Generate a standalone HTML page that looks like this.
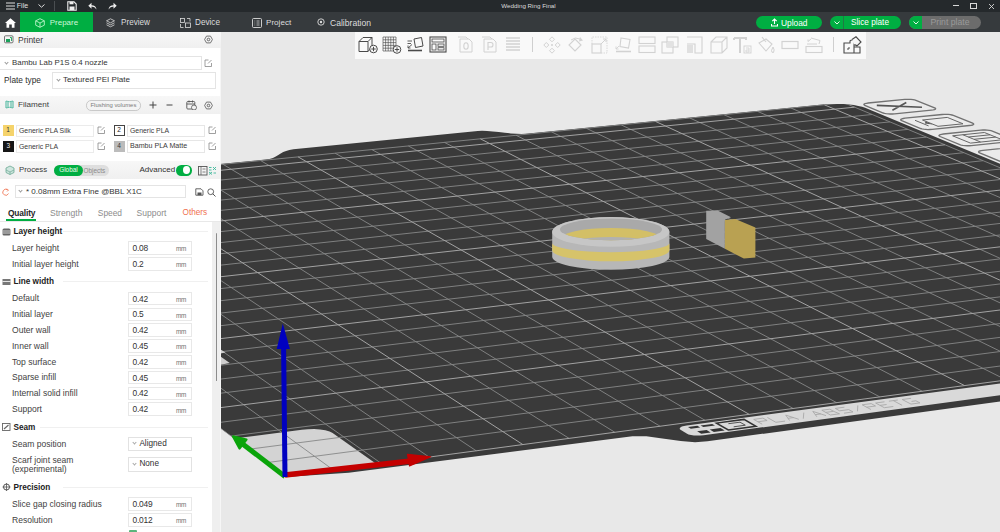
<!DOCTYPE html>
<html><head><meta charset="utf-8">
<style>
*{box-sizing:border-box;margin:0;padding:0}
body{width:1000px;height:532px;overflow:hidden;position:relative;background:#e8e8e8;font-family:"Liberation Sans",sans-serif;color:#333}
.a{position:absolute;white-space:nowrap;line-height:1}
#title{left:0;top:0;width:1000px;height:12px;background:#25292c}
#tabs{left:0;top:12px;width:1000px;height:20px;background:#363a3d}
#panel{left:0;top:32px;width:221px;height:500px;background:#fff;border-right:1px solid #f6f6f6;overflow:hidden}
.hdr{position:absolute;left:0;width:220px;background:#f2f2f2}
.lbl{position:absolute;left:12px;font-size:8.4px;color:#505050;white-space:nowrap;line-height:1}
.box{position:absolute;left:128px;width:63.5px;height:14px;border:1px solid #e3e3e3;border-radius:1px;background:#fff}
.box .v{position:absolute;left:4px;top:3px;font-size:8px;line-height:1;color:#303030}
.box .u{position:absolute;left:47px;top:5.5px;font-size:6px;line-height:1;color:#666}
.dd{position:absolute;left:128px;width:63.5px;height:14px;border:1px solid #e3e3e3;border-radius:1px;background:#fff}
.dd .v{position:absolute;left:11px;top:3px;font-size:8.2px;line-height:1;color:#303030}
.chev{position:absolute;width:4px;height:4px;border-right:1px solid #aaa;border-bottom:1px solid #aaa;transform:rotate(45deg)}
.grp{position:absolute;left:13.5px;font-size:8.2px;font-weight:bold;color:#262626;white-space:nowrap;line-height:1}
.gl{position:absolute;height:1px;background:#efefef}
.gi{position:absolute;left:2px;width:8px;height:7px}
#tb{left:355px;top:32px;width:511px;height:26.6px;background:#f9f9f9}
.tab{position:absolute;top:17.5px;font-size:8.2px;line-height:1;color:#e6e6e6}
.btn{position:absolute;top:16px;height:13px;border-radius:6.5px;background:#00ae42}
.btxt{position:absolute;top:18.5px;font-size:8.3px;line-height:1;color:#fff}
.fbox{position:absolute;width:78px;height:12.5px;border:1px solid #e6e6e6;background:#fff}
.fbox span{position:absolute;left:3px;top:2.5px;font-size:6.9px;line-height:1;color:#333}
.num{position:absolute;width:10.5px;height:11.5px;font-size:6px;line-height:11.5px;text-align:center}
</style></head>
<body>
<div id="title" class="a"></div>
<div id="tabs" class="a"></div>
<svg class="a" style="left:6px;top:2px" width="9" height="8" viewBox="0 0 9 8"><path d="M0,1 L9,1 M0,4 L9,4 M0,7 L9,7" stroke="#e0e0e0" stroke-width="1"/></svg>
<div class="a" style="left:16.8px;top:2.37px;font-size:7px;color:#e0e0e0;font-weight:normal;">File</div>
<svg class="a" style="left:38px;top:4px" width="7" height="4" viewBox="0 0 7 4"><path d="M0.5,0.5 L3.5,3.2 L6.5,0.5" fill="none" stroke="#ddd" stroke-width="1"/></svg>
<div class="a" style="left:54px;top:1px;width:1.00px;height:10.00px;background:#4a4e51"></div>
<svg class="a" style="left:67px;top:1px" width="10" height="10" viewBox="0 0 10 10"><path d="M0.8,0.8 L7,0.8 L9.2,3 L9.2,9.2 L0.8,9.2 Z" fill="none" stroke="#eee" stroke-width="1.1"/><rect x="2.5" y="5.5" width="5" height="3.5" fill="#eee"/><rect x="2.5" y="0.8" width="4" height="2.5" fill="#eee"/></svg>
<svg class="a" style="left:88px;top:1.5px" width="9" height="8" viewBox="0 0 9 8"><path d="M8.5,7.5 Q8,3.2 3.5,3.2 L3.5,0.8 L0.3,3.8 L3.5,6.8 L3.5,4.6 Q6.8,4.6 8.5,7.5 Z" fill="#eee"/></svg>
<svg class="a" style="left:108px;top:1.5px" width="9" height="8" viewBox="0 0 9 8"><path d="M0.5,7.5 Q1,3.2 5.5,3.2 L5.5,0.8 L8.7,3.8 L5.5,6.8 L5.5,4.6 Q2.2,4.6 0.5,7.5 Z" fill="#eee"/></svg>
<div class="a" style="left:501.3px;top:2.54px;font-size:6.25px;color:#dcdcdc;font-weight:normal;">Wedding Ring Final</div>
<div class="a" style="left:953px;top:5px;width:5.50px;height:0.80px;background:#d8d8d8"></div>
<div class="a" style="left:969.5px;top:2.5px;width:7.50px;height:6.00px;border:0.8px solid #d8d8d8;border-top-width:1.6px"></div>
<svg class="a" style="left:987.5px;top:2.5px" width="7" height="7" viewBox="0 0 7 7"><path d="M1,1 L6,6 M6,1 L1,6" stroke="#d8d8d8" stroke-width="0.9"/></svg>
<svg class="a" style="left:5px;top:17.5px" width="11" height="10" viewBox="0 0 11 10"><path d="M5.5,0.3 L11,5 L9.5,5 L9.5,9.7 L6.8,9.7 L6.8,6.5 L4.2,6.5 L4.2,9.7 L1.5,9.7 L1.5,5 L0,5 Z" fill="#fff"/></svg>
<div class="a" style="left:20px;top:12px;width:72.50px;height:19.50px;background:#00ae42"></div>
<svg class="a" style="left:34.5px;top:17.5px" width="10" height="10" viewBox="0 0 10 10"><path d="M5,0.7 L9.3,2.8 L9.3,7.2 L5,9.3 L0.7,7.2 L0.7,2.8 Z M0.7,2.8 L5,5 L9.3,2.8 M5,5 L5,9.3" fill="none" stroke="#b9f5c8" stroke-width="0.9"/></svg>
<div class="a" style="left:49.7px;top:19.08px;font-size:8px;color:#cdf7d6;font-weight:normal;">Prepare</div>
<svg class="a" style="left:105.5px;top:17.5px" width="9" height="10" viewBox="0 0 9 10"><path d="M4.5,0.8 L8.5,2.8 L4.5,4.8 L0.5,2.8 Z" fill="none" stroke="#ddd" stroke-width="0.8"/><path d="M0.5,4.8 L4.5,6.8 L8.5,4.8 M0.5,6.8 L4.5,8.8 L8.5,6.8" fill="none" stroke="#ddd" stroke-width="0.8"/></svg>
<div class="a" style="left:121px;top:19.01px;font-size:8.15px;color:#dddddd;font-weight:normal;">Preview</div>
<svg class="a" style="left:180px;top:17.5px" width="11" height="10" viewBox="0 0 11 10"><rect x="0.5" y="0.5" width="4" height="4" fill="none" stroke="#ddd" stroke-width="0.8"/><rect x="5.5" y="5" width="5" height="4.5" fill="none" stroke="#ddd" stroke-width="0.8"/><path d="M7,0.5 L10,0.5 L10,3.5 M0.5,6 L0.5,9.5 L3.5,9.5" fill="none" stroke="#ddd" stroke-width="0.8"/></svg>
<div class="a" style="left:195px;top:18.99px;font-size:8.18px;color:#dddddd;font-weight:normal;">Device</div>
<svg class="a" style="left:252px;top:17.5px" width="10" height="10" viewBox="0 0 10 10"><rect x="0.5" y="0.5" width="9" height="9" rx="1" fill="none" stroke="#ddd" stroke-width="0.9"/><path d="M2.5,3 L3.2,3 M2.5,5 L3.2,5 M2.5,7 L3.2,7 M4.5,3 L7.5,3 M4.5,5 L7.5,5 M4.5,7 L7.5,7" stroke="#ddd" stroke-width="0.75"/></svg>
<div class="a" style="left:266px;top:19.03px;font-size:8.1px;color:#dddddd;font-weight:normal;">Project</div>
<svg class="a" style="left:316.5px;top:18px" width="8" height="8" viewBox="0 0 8 8"><circle cx="4" cy="4" r="3.2" fill="none" stroke="#ddd" stroke-width="0.9"/><circle cx="4" cy="4" r="1.2" fill="#ddd"/></svg>
<div class="a" style="left:330px;top:18.80px;font-size:8.58px;color:#dddddd;font-weight:normal;">Calibration</div>
<div class="a" style="left:755.5px;top:16.2px;width:66.50px;height:12.80px;background:#00ae42;border-radius:6.5px"></div>
<svg class="a" style="left:771px;top:17.5px" width="7" height="9" viewBox="0 0 7 9"><path d="M3.5,6 L3.5,1 M1.3,3.2 L3.5,1 L5.7,3.2 M0.5,6 L0.5,8 L6.5,8 L6.5,6" fill="none" stroke="#fff" stroke-width="1.1"/></svg>
<div class="a" style="left:781px;top:18.50px;font-size:8.36px;color:#ffffff;font-weight:normal;">Upload</div>
<div class="a" style="left:829.5px;top:16.2px;width:71.50px;height:12.80px;background:#00ae42;border-radius:6.5px"></div>
<div class="a" style="left:842.5px;top:16.2px;width:0.70px;height:12.80px;background:#1f7a44"></div>
<svg class="a" style="left:833.5px;top:21px" width="6" height="4" viewBox="0 0 6 4"><path d="M0.5,0.5 L3,3 L5.5,0.5" fill="none" stroke="#fff" stroke-width="0.9"/></svg>
<div class="a" style="left:851px;top:18.56px;font-size:8.24px;color:#ffffff;font-weight:normal;">Slice plate</div>
<div class="a" style="left:909px;top:16.2px;width:72.00px;height:12.80px;background:#6c6c6c;border-radius:6.5px"></div>
<div class="a" style="left:909px;top:16.2px;width:13.00px;height:12.80px;background:#00ae42;border-radius:6.5px 0 0 6.5px"></div>
<svg class="a" style="left:912.5px;top:21px" width="6" height="4" viewBox="0 0 6 4"><path d="M0.5,0.5 L3,3 L5.5,0.5" fill="none" stroke="#fff" stroke-width="0.9"/></svg>
<div class="a" style="left:930.5px;top:18.36px;font-size:8.66px;color:#9a9a9a;font-weight:normal;">Print plate</div>
<svg width="780" height="500" viewBox="220 32 780 500" style="position:absolute;left:220px;top:32px">
<defs><clipPath id="pc"><path d="M285.4,477.1 L-90.5,194.7 L265.5,159.5 L269.5,158.9 L272.9,157.9 L275.8,156.6 L278.3,155.1 L280.7,153.6 L283.2,152.1 L286.1,150.9 L289.4,149.9 L293.4,149.3 L477.8,131.0 L482.1,130.8 L487.1,131.0 L492.7,131.4 L498.7,132.0 L504.8,132.7 L510.8,133.4 L516.4,133.8 L521.4,134.0 L525.7,133.8 L525.7,133.8 L822.3,104.5 L827.4,104.1 L832.8,103.9 L838.3,103.9 L843.7,104.1 L849.0,104.5 L853.9,105.1 L858.3,105.9 L862.1,106.8 L865.1,107.8 L1431.6,342.8 L707.5,441.3 L695.1,442.2 L680.7,440.9 L660.6,438.2 L646.4,436.3 L632.4,436.3 L348.6,472.8 Z"/></clipPath></defs>
<path fill="#3a3a3a" d="M285.4,477.1 L-90.5,194.7 L265.5,159.5 L269.5,158.9 L272.9,157.9 L275.8,156.6 L278.3,155.1 L280.7,153.6 L283.2,152.1 L286.1,150.9 L289.4,149.9 L293.4,149.3 L477.8,131.0 L482.1,130.8 L487.1,131.0 L492.7,131.4 L498.7,132.0 L504.8,132.7 L510.8,133.4 L516.4,133.8 L521.4,134.0 L525.7,133.8 L525.7,133.8 L822.3,104.5 L827.4,104.1 L832.8,103.9 L838.3,103.9 L843.7,104.1 L849.0,104.5 L853.9,105.1 L858.3,105.9 L862.1,106.8 L865.1,107.8 L1431.6,342.8 L707.5,441.3 L695.1,442.2 L680.7,440.9 L660.6,438.2 L646.4,436.3 L632.4,436.3 L348.6,472.8 Z"/>
<path fill="#d3d3d3" d="M285.4,477.1 L377.5,464.8 L332.6,433.0 L329.6,431.5 L325.3,430.3 L320.1,429.5 L314.1,429.1 L307.9,429.2 L301.9,429.8 L234.0,438.5 Z"/>
<path fill="#d9d9d9" d="M1567.5,318.4 L1569.6,318.0 L1571.1,317.5 L1571.9,316.8 L1572.0,316.0 L1571.2,315.3 L1569.8,314.6 L1562.4,311.7 L1560.3,311.1 L1557.8,310.6 L1554.9,310.2 L1552.0,310.0 L1549.1,310.1 L1546.5,310.3 L686.7,425.4 L684.0,425.9 L681.8,426.6 L680.4,427.4 L679.7,428.3 L679.9,429.2 L680.9,430.1 L686.7,433.6 L688.5,434.4 L691.0,435.0 L693.9,435.4 L697.1,435.6 L700.4,435.6 L703.5,435.3 Z"/>
<path fill="#333" d="M690.8,428.8 L700.2,427.5 L697.4,425.8 L688.0,427.1 Z"/>
<path fill="#333" d="M703.4,427.1 L715.0,425.5 L712.2,423.9 L700.5,425.4 Z"/>
<path fill="#333" d="M701.3,433.7 L710.7,432.4 L706.6,429.9 L697.1,431.2 Z"/>
<path fill="#333" d="M713.9,432.0 L724.7,430.5 L720.5,428.1 L709.7,429.5 Z"/>
<path fill="none" stroke="#333" stroke-width="1.5" d="M728.3,430.0 L755.9,426.3 L744.0,419.4 L716.4,423.1 Z"/>
<path fill="none" stroke="#444" stroke-width="0.9" d="M728.4,423.7 L740.0,422.2 L745.3,425.2 L733.7,426.8"/>
<path fill="none" stroke="#a8a8a8" stroke-width="0.9" d="M762.2,424.2 L753.7,419.4 L762.9,418.1 L767.1,420.5 L757.9,421.8 M767.4,417.5 L775.9,422.3 L785.1,421.1 M789.6,420.5 L785.7,415.1 L798.8,419.3 M787.9,418.3 L793.6,417.6 M803.3,418.7 L803.8,412.6 M816.9,416.8 L812.8,411.4 L826.0,415.6 M815.1,414.7 L820.8,413.9 M830.4,415.0 L821.8,410.2 L829.8,409.2 L833.6,411.3 L825.7,412.4 M833.6,411.3 L839.5,413.8 L830.4,415.0 M844.4,407.2 L835.3,408.4 L839.6,410.8 L848.7,409.6 L853.0,411.9 L844.0,413.2 M857.5,411.3 L857.8,405.4 M870.9,409.5 L862.2,404.8 L871.2,403.6 L875.5,406.0 L866.5,407.2 M884.5,401.8 L875.6,403.0 L884.3,407.7 L893.3,406.5 M879.9,405.4 L886.6,404.5 M888.9,401.2 L897.8,400.0 M893.3,400.6 L902.1,405.3 M911.1,398.3 L902.2,399.5 L911.0,404.1 L919.9,402.9 L915.9,400.8 L911.5,401.4"/>
<path stroke="#878888" stroke-width="0.9" fill="none" clip-path="url(#pc)" d="M333.2,469.9 L-49.5,191.3 M381.4,463.5 L-9.6,187.3 M429.1,457.1 L30.0,183.4 M476.2,450.8 L69.2,179.5 M569.1,438.4 L146.8,171.9 M614.9,432.3 L185.1,168.1 M660.2,426.3 L223.0,164.3 M705.0,420.3 L260.7,160.6 M793.2,408.5 L335.1,153.2 M836.7,402.7 L371.9,149.6 M879.8,396.9 L408.4,146.0 M922.4,391.3 L444.5,142.4 M1006.3,380.0 L516.1,135.3 M1047.7,374.5 L551.4,131.8 M1088.7,369.0 L586.4,128.3 M1129.3,363.6 L621.2,124.9 M1209.2,352.9 L690.0,118.1 M1248.7,347.7 L723.9,114.7 M1287.7,342.5 L757.6,111.4 M1326.4,337.3 L791.1,108.1 M1387.5,329.1 L844.1,102.8 M266.3,462.7 L1361.7,318.4 M248.4,449.3 L1336.3,307.8 M230.9,436.1 L1311.3,297.4 M213.7,423.2 L1286.8,287.2 M180.3,398.2 L1239.0,267.3 M164.1,386.0 L1215.7,257.6 M148.2,374.0 L1192.7,248.0 M132.6,362.3 L1170.2,238.6 M102.2,339.5 L1126.2,220.3 M87.4,328.4 L1104.8,211.4 M72.9,317.5 L1083.7,202.6 M58.7,306.8 L1062.9,194.0 M30.9,286.0 L1022.4,177.1 M17.4,275.8 L1002.5,168.8 M4.2,265.8 L983.0,160.7 M-8.9,256.0 L963.8,152.7 M-34.4,236.9 L926.3,137.1 M-46.8,227.6 L907.9,129.4 M-59.0,218.4 L889.9,121.9 M-71.0,209.4 L872.1,114.5 M-89.8,195.3 L844.1,102.8"/>
<path stroke="#a3a3a3" stroke-width="1" fill="none" clip-path="url(#pc)" d="M284.5,476.4 L-89.8,195.3 M522.9,444.6 L108.2,175.7 M749.3,414.4 L298.1,156.9 M964.6,385.6 L480.4,138.8 M1169.4,358.3 L655.7,121.5 M1364.7,332.2 L824.3,104.8 M284.5,476.4 L1387.5,329.1 M196.8,410.6 L1262.7,277.1 M117.3,350.8 L1148.0,229.4 M44.7,296.3 L1042.5,185.4 M-21.7,246.4 L944.9,144.8 M-82.8,200.5 L854.5,107.2"/>
<path fill="#ebebeb" stroke="#727272" stroke-width="1.35" d="M931.4,110.1 L933.1,109.9 L934.5,109.6 L935.3,109.2 L935.6,108.7 L935.4,108.3 L934.6,107.8 L915.9,100.3 L914.6,99.9 L913.0,99.6 L911.0,99.4 L908.9,99.3 L906.8,99.3 L904.8,99.4 L868.2,103.0 L866.5,103.3 L865.1,103.6 L864.2,104.0 L863.9,104.4 L864.1,104.9 L864.8,105.3 L883.3,113.0 L884.5,113.4 L886.2,113.7 L888.2,113.9 L890.3,114.0 L892.5,114.0 L894.5,113.9 Z"/>
<path fill="#ebebeb" stroke="#727272" stroke-width="1.35" d="M969.4,125.5 L971.2,125.3 L972.5,125.0 L973.4,124.5 L973.7,124.1 L973.5,123.6 L972.6,123.1 L953.3,115.4 L952.0,115.0 L950.3,114.6 L948.3,114.4 L946.2,114.3 L944.1,114.3 L942.1,114.5 L905.0,118.2 L903.3,118.5 L901.9,118.8 L901.0,119.2 L900.7,119.7 L900.9,120.2 L901.7,120.6 L920.7,128.5 L922.0,128.9 L923.7,129.2 L925.7,129.4 L927.9,129.6 L930.1,129.5 L932.1,129.4 Z"/>
<path fill="#ebebeb" stroke="#727272" stroke-width="1.35" d="M1009.1,141.6 L1010.9,141.3 L1012.2,141.0 L1013.1,140.5 L1013.4,140.1 L1013.1,139.6 L1012.2,139.1 L992.3,131.1 L991.0,130.7 L989.2,130.3 L987.2,130.1 L985.0,130.0 L982.9,130.0 L980.8,130.2 L943.4,134.0 L941.6,134.3 L940.3,134.7 L939.4,135.1 L939.0,135.5 L939.3,136.0 L940.1,136.5 L959.8,144.6 L961.1,145.1 L962.8,145.4 L964.9,145.6 L967.1,145.7 L969.3,145.7 L971.4,145.6 Z"/>
<path fill="#ebebeb" stroke="#727272" stroke-width="1.35" d="M1050.0,158.2 L1051.8,157.9 L1053.2,157.5 L1054.0,157.1 L1054.3,156.6 L1054.0,156.1 L1053.1,155.6 L1032.5,147.3 L1031.2,146.9 L1029.4,146.5 L1027.3,146.3 L1025.1,146.2 L1022.9,146.2 L1020.8,146.3 L983.0,150.4 L981.2,150.6 L979.8,151.0 L978.9,151.4 L978.6,151.9 L978.9,152.4 L979.7,152.9 L1000.0,161.3 L1001.4,161.7 L1003.2,162.1 L1005.3,162.3 L1007.5,162.4 L1009.8,162.4 L1011.9,162.3 Z"/>
<path stroke="#555" stroke-width="1.6" d="M876.8,105.4 L922.0,107.2 M892.4,110.2 L906.3,102.5"/>
<path fill="none" stroke="#666" stroke-width="1" d="M938.0,126.3 L963.0,123.8 L947.3,117.4 L922.5,120.0 Z M928.6,125.9 L915.0,120.3"/>
<path fill="#555" d="M924.8,123.5 L932.8,124.5 L925.5,121.5 Z"/>
<path fill="none" stroke="#666" stroke-width="1" d="M970.5,143.1 L1002.4,139.8 L984.4,132.5 L952.6,135.8 Z M980.6,142.0 L962.7,134.7 M974.0,139.3 L995.8,137.1 M968.3,137.0 L990.1,134.8"/>
<path fill="#d0d0d0" d="M220.5,349.5 L225.5,352.6 L220.5,353.6 Z M220.5,356.6 L229.8,363 L220.5,364.8 Z"/>
<path d="M285,475 L409,461.2" stroke="#c40000" stroke-width="5.5" stroke-linecap="butt"/>
<path d="M430.7,456.8 L407.5,454.4 L409.5,465.9 Z" fill="#c40000" stroke="#c40000" stroke-width="1.2" stroke-linejoin="round"/>
<path d="M285,476.5 L242,443.5" stroke="#0aa40a" stroke-width="5"/>
<path d="M233,436.4 L246.5,439.5 L239.5,448.5 Z" fill="#0aa40a" stroke="#0aa40a" stroke-width="2.2" stroke-linejoin="round"/>
<path d="M285,477 L283.6,348" stroke="#0000c0" stroke-width="5"/>
<path d="M282.8,323.5 L276.7,349 L289.9,349 Z" fill="#0000c0"/>
<path d="M552.1999999999999,232 A58.6,15 0 0 1 669.4,232 L669.4,256.8 A58.6,13 0 0 1 552.1999999999999,256.8 Z" fill="#b7b7b7"/>
<ellipse cx="610.8" cy="232" rx="58.6" ry="14.8" fill="#c6c6c6"/>
<path d="M552.1999999999999,243 A58.6,9.2 0 0 0 669.4,243 L669.4,250.3 A58.6,11 0 0 1 552.1999999999999,250.3 Z" fill="#d6c36a"/>
<defs><clipPath id="hole"><ellipse cx="611" cy="229.4" rx="51" ry="10.9"/></clipPath></defs>
<g clip-path="url(#hole)"><rect x="555" y="216" width="112" height="28" fill="#a9a9a9"/><ellipse cx="611" cy="238.9" rx="51" ry="10.9" fill="#d3bf66"/><ellipse cx="611" cy="247.9" rx="51" ry="10.9" fill="#b1b1b1"/></g>
<path d="M706.2,210.8 L717.6,210.4 L731,217.2 L724.9,219.8 L724.9,248.8 L706.2,239 Z" fill="#a2a2a2"/>
<path d="M724.9,220.1 L735.3,218.9 L755.4,227.5 L755.4,257.4 L743.8,258.6 L724.9,248.8 Z" fill="#b9a152"/>
</svg>
<div id="tb" class="a"></div>
<svg class="a" style="left:358px;top:35.5px" width="20" height="18" viewBox="0 0 20 18"><path d="M1,5.5 L5,1.5 L14,1.5 L14,11 L10,15.5 L1,15.5 Z M1,5.5 L10,5.5 L14,1.5 M10,5.5 L10,15.5" fill="none" stroke="#4a4a4a" stroke-width="1"/><circle cx="15.5" cy="13" r="3.8" fill="#f7f7f7" stroke="#4a4a4a" stroke-width="1"/><path d="M15.5,10.8 L15.5,15.2 M13.3,13 L17.7,13" stroke="#4a4a4a" stroke-width="1"/></svg>
<svg class="a" style="left:382px;top:35.5px" width="20" height="18" viewBox="0 0 20 18"><path d="M1.0,1 L1.0,15 M3.6,1 L3.6,15 M6.2,1 L6.2,15 M8.8,1 L8.8,15 M11.4,1 L11.4,15 M14.0,1 L14.0,15 M1,1.0 L14,1.0 M1,3.8 L14,3.8 M1,6.6 L14,6.6 M1,9.4 L14,9.4 M1,12.2 L14,12.2 M1,15.0 L14,15.0 " stroke="#4a4a4a" stroke-width="0.65" fill="none"/><circle cx="15" cy="13.5" r="3.8" fill="#f7f7f7" stroke="#4a4a4a" stroke-width="1"/><path d="M15,11.3 L15,15.7 M12.8,13.5 L17.2,13.5" stroke="#4a4a4a" stroke-width="1"/></svg>
<svg class="a" style="left:406px;top:35.5px" width="20" height="18" viewBox="0 0 20 18"><path d="M8,3 L15.5,1.5 L17,10 L9.5,11.5 Z" fill="none" stroke="#4a4a4a" stroke-width="1"/><path d="M2,14.5 L16,14.5" stroke="#4a4a4a" stroke-width="1.6"/><path d="M1.5,5 L6,5 M1.5,7.5 L5,7.5 M2,12 L6,8.5 M2,12 L2,9.5 M2,12 L4.5,12" stroke="#4a4a4a" stroke-width="0.9" fill="none"/></svg>
<svg class="a" style="left:429px;top:35.5px" width="20" height="18" viewBox="0 0 20 18"><rect x="1" y="1" width="16" height="15" fill="none" stroke="#4a4a4a" stroke-width="1.1"/><rect x="3" y="3" width="12" height="3" fill="none" stroke="#4a4a4a" stroke-width="0.8"/><rect x="3" y="8" width="4" height="6" fill="none" stroke="#4a4a4a" stroke-width="0.8"/><rect x="9" y="8" width="6" height="2.3" fill="none" stroke="#4a4a4a" stroke-width="0.8"/><rect x="9" y="11.7" width="6" height="2.3" fill="none" stroke="#4a4a4a" stroke-width="0.8"/></svg>
<svg class="a" style="left:457px;top:35.5px" width="20" height="18" viewBox="0 0 20 18"><path d="M1,1 L9,1 L11,3 M3,3 L12,3 L15,6 L15,16 L3,16 Z" fill="none" stroke="#d2d2d2" stroke-width="1"/><ellipse cx="9" cy="10" rx="2.2" ry="3.3" fill="none" stroke="#d2d2d2" stroke-width="1.1"/></svg>
<svg class="a" style="left:481px;top:35.5px" width="20" height="18" viewBox="0 0 20 18"><path d="M1,1 L9,1 L11,3 M3,3 L12,3 L15,6 L15,16 L3,16 Z" fill="none" stroke="#d2d2d2" stroke-width="1"/><path d="M7,14 L7,6.5 L10,6.5 Q12,6.5 12,8.7 Q12,11 10,11 L7,11" fill="none" stroke="#d2d2d2" stroke-width="1.1"/></svg>
<svg class="a" style="left:505px;top:35.5px" width="17" height="18" viewBox="0 0 17 18"><path d="M1,2 L15,2 M1,5 L15,5 M1,8 L15,8 M1,11 L15,11 M1,14 L15,14" stroke="#d2d2d2" stroke-width="1.5"/></svg>
<div class="a" style="left:532px;top:37px;width:1.20px;height:15.00px;background:#cfcfcf"></div>
<svg class="a" style="left:543px;top:35.5px" width="20" height="18" viewBox="0 0 20 18"><path d="M9,0.8 L11.5,3.3 L9,5.8 L6.5,3.3 Z M9,12.2 L11.5,14.7 L9,17.2 L6.5,14.7 Z M0.8,9 L3.3,6.5 L5.8,9 L3.3,11.5 Z M12.2,9 L14.7,6.5 L17.2,9 L14.7,11.5 Z" fill="none" stroke="#d2d2d2" stroke-width="1"/><circle cx="9" cy="9" r="1" fill="#d2d2d2"/></svg>
<svg class="a" style="left:567px;top:35.5px" width="20" height="18" viewBox="0 0 20 18"><path d="M8,3 L14,9 L8,15 L2,9 Z" fill="none" stroke="#d2d2d2" stroke-width="1.1"/><path d="M4,4 Q8,0.5 13,3" fill="none" stroke="#d2d2d2" stroke-width="1"/><path d="M13,1 L16,4.5 L12,5.5 Z" fill="#d2d2d2"/></svg>
<svg class="a" style="left:591px;top:35.5px" width="20" height="18" viewBox="0 0 20 18"><rect x="1" y="8" width="9" height="9" fill="none" stroke="#d2d2d2" stroke-width="1.1"/><path d="M1,8 L1,1 L16,1 L16,17 L10,17" fill="none" stroke="#d2d2d2" stroke-width="0.8" stroke-dasharray="1.5,1"/><path d="M10,8 L15,3 M12,3 L15,3 L15,6" fill="none" stroke="#d2d2d2" stroke-width="1"/></svg>
<svg class="a" style="left:614px;top:35.5px" width="20" height="18" viewBox="0 0 20 18"><path d="M7,2 L16,3.5 L14.5,12 L6,10.5 Z" fill="none" stroke="#d2d2d2" stroke-width="1.1"/><path d="M2,15.5 L17,15.5" stroke="#d2d2d2" stroke-width="1.6"/><path d="M2,13 L5,10 M2,13 L2,10.5 M2,13 L4.5,13" stroke="#d2d2d2" stroke-width="0.9" fill="none"/></svg>
<svg class="a" style="left:638px;top:35.5px" width="20" height="18" viewBox="0 0 20 18"><rect x="1" y="1" width="16" height="6.5" fill="none" stroke="#d2d2d2" stroke-width="1.1"/><rect x="1" y="10" width="16" height="6.5" fill="none" stroke="#d2d2d2" stroke-width="1.1"/></svg>
<svg class="a" style="left:661px;top:35.5px" width="20" height="18" viewBox="0 0 20 18"><rect x="6" y="1" width="11" height="10" fill="none" stroke="#d2d2d2" stroke-width="1.1"/><rect x="1" y="6" width="11" height="11" fill="none" stroke="#d2d2d2" stroke-width="1.1"/><rect x="6" y="6" width="6" height="5" fill="#e2e2e2"/></svg>
<svg class="a" style="left:686px;top:35.5px" width="20" height="18" viewBox="0 0 20 18"><path d="M1,1 L16,1 L16,17 L9,17 L9,8 L1,8" fill="none" stroke="#d2d2d2" stroke-width="1.1"/><rect x="1" y="9" width="6" height="8" fill="#e0e0e0"/></svg>
<svg class="a" style="left:710px;top:35.5px" width="20" height="18" viewBox="0 0 20 18"><path d="M1,6 L6,1 L17,1 L17,12 L12,17 L1,17 Z M1,6 L12,6 L17,1 M12,6 L12,17" fill="none" stroke="#d2d2d2" stroke-width="1.1"/></svg>
<svg class="a" style="left:733px;top:35.5px" width="20" height="18" viewBox="0 0 20 18"><path d="M1,2 L13,2 L13,4 M1,2 L1,4 M7,2 L7,17" fill="none" stroke="#d2d2d2" stroke-width="2"/><rect x="11" y="10" width="7" height="7" fill="none" stroke="#d2d2d2" stroke-width="0.9"/><path d="M13,12 L16,12 L16,16 L13,16 L13,14 L16,14" fill="none" stroke="#d2d2d2" stroke-width="0.8"/></svg>
<svg class="a" style="left:756.5px;top:35.5px" width="20" height="18" viewBox="0 0 20 18"><path d="M2,7 L9,3 L15,8 L9,15 Z" fill="none" stroke="#d2d2d2" stroke-width="1.1"/><path d="M5,1 L9,6" stroke="#d2d2d2" stroke-width="1.1"/><path d="M16,11 Q18,14 16.5,16.5 Q14.5,17 14.5,14.5 Z" fill="none" stroke="#d2d2d2" stroke-width="1"/></svg>
<svg class="a" style="left:781px;top:35.5px" width="20" height="18" viewBox="0 0 20 18"><rect x="1" y="5.5" width="16" height="7" fill="none" stroke="#d2d2d2" stroke-width="1.2"/></svg>
<svg class="a" style="left:805px;top:35.5px" width="20" height="18" viewBox="0 0 20 18"><rect x="1" y="10.5" width="16" height="6" fill="none" stroke="#d2d2d2" stroke-width="1.1"/><path d="M2,8 L12,8 M6,2 L15,4.5 L14,8 M3,5.5 L6,3 M3,5.5 L3,3.5" fill="none" stroke="#d2d2d2" stroke-width="1"/></svg>
<div class="a" style="left:832.5px;top:37px;width:1.20px;height:15.00px;background:#cfcfcf"></div>
<svg class="a" style="left:843px;top:35.5px" width="20" height="18" viewBox="0 0 20 18"><path d="M1,7 L7,7 L7,5 Q9,3 11,5 L11,7 L11,17 L1,17 Z M11,11 L17,11 L17,17 L11,17" fill="none" stroke="#4a4a4a" stroke-width="1.1"/><path d="M9,3.5 L13,0.8 L18,6 L14,10 Q12.5,8.5 11,9" fill="#f7f7f7" stroke="#4a4a4a" stroke-width="1.1"/><path d="M5,12 L7,12 M5,12 L5,14" stroke="#4a4a4a" stroke-width="1"/></svg>
<div id="panel" class="a">

</div>
<div class="a" style="left:0px;top:32px;width:221.00px;height:15.50px;background:linear-gradient(#f7f7f7,#f0f0f0)"></div>
<div class="a" style="left:0px;top:96px;width:221.00px;height:18.00px;background:linear-gradient(#f7f7f7,#f0f0f0)"></div>
<div class="a" style="left:0px;top:161px;width:221.00px;height:18.00px;background:linear-gradient(#f7f7f7,#f0f0f0)"></div>
<svg class="a" style="left:4px;top:35px" width="10" height="9" viewBox="0 0 10 9"><rect x="0.5" y="0.8" width="8.5" height="7" rx="1" fill="none" stroke="#666" stroke-width="0.9"/><rect x="2" y="4" width="4" height="3" fill="#1aa05a"/><path d="M6,2.5 L7.5,2.5 L7.5,6" stroke="#1aa05a" fill="none" stroke-width="0.9"/></svg>
<div class="a" style="left:18px;top:35.54px;font-size:8.5px;color:#383838;font-weight:normal;">Printer</div>
<svg class="a" style="left:204px;top:35px" width="9" height="9" viewBox="0 0 9 9"><path d="M0.6,4.5 L2.5,1.1 L6.5,1.1 L8.4,4.5 L6.5,7.9 L2.5,7.9 Z" fill="none" stroke="#666" stroke-width="0.9" stroke-linejoin="round"/><circle cx="4.5" cy="4.5" r="1.3" fill="none" stroke="#666" stroke-width="1"/></svg>
<div class="a" style="left:0px;top:56px;width:202.00px;height:13.50px;border:1px solid #e4e4e4;border-left:none;background:#fff"></div>
<div class="a" style="left:5px;top:60.5px;width:3px;height:3px;border-right:1px solid #9a9a9a;border-bottom:1px solid #9a9a9a;transform:rotate(45deg)"></div>
<div class="a" style="left:12px;top:59.33px;font-size:7.9px;color:#333;font-weight:normal;">Bambu Lab P1S 0.4 nozzle</div>
<svg class="a" style="left:204px;top:59px" width="9" height="9" viewBox="0 0 9 9"><path d="M4.5,1 L1,1 L1,7.5 L7.5,7.5 L7.5,4" fill="none" stroke="#888" stroke-width="0.8"/><path d="M4,4.5 L7.5,1" stroke="#888" stroke-width="0.8"/></svg>
<div class="a" style="left:4px;top:76.13px;font-size:8.3px;color:#2e2e2e;font-weight:normal;">Plate type</div>
<div class="a" style="left:52px;top:72px;width:163.60px;height:16.50px;border:1px solid #e4e4e4;background:#fff"></div>
<div class="a" style="left:57px;top:77.5px;width:3px;height:3px;border-right:1px solid #9a9a9a;border-bottom:1px solid #9a9a9a;transform:rotate(45deg)"></div>
<div class="a" style="left:63px;top:76.33px;font-size:8.1px;color:#333;font-weight:normal;">Textured PEI Plate</div>
<svg class="a" style="left:5px;top:100px" width="9" height="9" viewBox="0 0 9 9"><path d="M1,1 L1,8 M3,1.5 L3,7.5 M6,1.5 L6,7.5 M8,1 L8,8" stroke="#45b49a" stroke-width="1" fill="none"/><path d="M1,1 Q4.5,2.5 8,1 M1,8 Q4.5,6.5 8,8" stroke="#45b49a" stroke-width="0.8" fill="none"/></svg>
<div class="a" style="left:18px;top:101.23px;font-size:8.1px;color:#404040;font-weight:normal;">Filament</div>
<div class="a" style="left:86px;top:100.4px;width:55.00px;height:10.20px;border:1px solid #c9c9c9;border-radius:5.1px;background:#f4f4f4"></div>
<div class="a" style="left:90.5px;top:102.71px;font-size:5.9px;color:#7a7a7a;font-weight:normal;">Flushing volumes</div>
<svg class="a" style="left:149px;top:101px" width="8" height="8" viewBox="0 0 8 8"><path d="M4,0.5 L4,7.5 M0.5,4 L7.5,4" stroke="#444" stroke-width="1"/></svg>
<svg class="a" style="left:166px;top:101px" width="7" height="8" viewBox="0 0 7 8"><path d="M0.5,4 L6.5,4" stroke="#444" stroke-width="1"/></svg>
<svg class="a" style="left:186px;top:100px" width="11" height="10" viewBox="0 0 11 10"><rect x="0.8" y="1.5" width="8" height="7.5" rx="1" fill="none" stroke="#555" stroke-width="0.9"/><path d="M0.8,4 L8.8,4 M3,0.5 L3,2.5 M6.5,0.5 L6.5,2.5" stroke="#555" stroke-width="0.9"/><circle cx="8" cy="7.5" r="2.5" fill="#f2f2f2" stroke="#555" stroke-width="0.8"/></svg>
<svg class="a" style="left:204px;top:100.5px" width="9" height="9" viewBox="0 0 9 9"><path d="M0.6,4.5 L2.5,1.1 L6.5,1.1 L8.4,4.5 L6.5,7.9 L2.5,7.9 Z" fill="none" stroke="#666" stroke-width="0.9" stroke-linejoin="round"/><circle cx="4.5" cy="4.5" r="1.3" fill="none" stroke="#666" stroke-width="1"/></svg>
<div class="a" style="left:3px;top:125px;width:10.50px;height:11.00px;background:#f5d36b"></div>
<div class="a" style="left:6.3px;top:127.41px;font-size:6.5px;color:#333;font-weight:normal;">1</div>
<div class="a" style="left:16px;top:124.5px;width:78.00px;height:12.50px;border:1px solid #ebebeb;background:#fff"></div>
<div class="a" style="left:19px;top:128.02px;font-size:6.9px;color:#3a3a3a;font-weight:normal;">Generic PLA Silk</div>
<svg class="a" style="left:97px;top:126px" width="9" height="9" viewBox="0 0 9 9"><path d="M4.5,1 L1,1 L1,7.5 L7.5,7.5 L7.5,4" fill="none" stroke="#888" stroke-width="0.8"/><path d="M4,4.5 L7.5,1" stroke="#888" stroke-width="0.8"/></svg>
<div class="a" style="left:114px;top:124.5px;width:10.60px;height:11.50px;border:1px solid #444;background:#fff"></div>
<div class="a" style="left:117.3px;top:127.41px;font-size:6.5px;color:#222;font-weight:normal;">2</div>
<div class="a" style="left:127px;top:124.5px;width:78.00px;height:12.50px;border:1px solid #e6e6e6;background:#fff"></div>
<div class="a" style="left:130px;top:128.02px;font-size:6.9px;color:#3a3a3a;font-weight:normal;">Generic PLA</div>
<svg class="a" style="left:208px;top:126px" width="9" height="9" viewBox="0 0 9 9"><path d="M4.5,1 L1,1 L1,7.5 L7.5,7.5 L7.5,4" fill="none" stroke="#888" stroke-width="0.8"/><path d="M4,4.5 L7.5,1" stroke="#888" stroke-width="0.8"/></svg>
<div class="a" style="left:3px;top:141px;width:11.00px;height:11.00px;background:#161616"></div>
<div class="a" style="left:6.5px;top:143.41px;font-size:6.5px;color:#eee;font-weight:normal;">3</div>
<div class="a" style="left:16px;top:140px;width:78.00px;height:12.50px;border:1px solid #ebebeb;background:#fff"></div>
<div class="a" style="left:19px;top:143.52px;font-size:6.9px;color:#3a3a3a;font-weight:normal;">Generic PLA</div>
<svg class="a" style="left:97px;top:142px" width="9" height="9" viewBox="0 0 9 9"><path d="M4.5,1 L1,1 L1,7.5 L7.5,7.5 L7.5,4" fill="none" stroke="#888" stroke-width="0.8"/><path d="M4,4.5 L7.5,1" stroke="#888" stroke-width="0.8"/></svg>
<div class="a" style="left:114px;top:141px;width:10.60px;height:11.00px;background:#bcbcbc"></div>
<div class="a" style="left:117.3px;top:143.41px;font-size:6.5px;color:#333;font-weight:normal;">4</div>
<div class="a" style="left:127px;top:140px;width:78.00px;height:12.50px;border:1px solid #e6e6e6;background:#fff"></div>
<div class="a" style="left:130px;top:143.42px;font-size:7.1px;color:#3a3a3a;font-weight:normal;">Bambu PLA Matte</div>
<svg class="a" style="left:208px;top:142px" width="9" height="9" viewBox="0 0 9 9"><path d="M4.5,1 L1,1 L1,7.5 L7.5,7.5 L7.5,4" fill="none" stroke="#888" stroke-width="0.8"/><path d="M4,4.5 L7.5,1" stroke="#888" stroke-width="0.8"/></svg>
<svg class="a" style="left:4.5px;top:165px" width="10" height="10" viewBox="0 0 10 10"><path d="M1,3 L5,1 L9,3 L9,7.5 L5,9.5 L1,7.5 Z" fill="#cfe6df" stroke="#6ba893" stroke-width="0.8"/><path d="M1,5 L5,7 L9,5 M5,7 L5,9.5" stroke="#6ba893" stroke-width="0.7" fill="none"/></svg>
<div class="a" style="left:19px;top:166.38px;font-size:7.8px;color:#383838;font-weight:normal;">Process</div>
<div class="a" style="left:54px;top:165px;width:54.50px;height:11.00px;background:#dedede;border-radius:5.5px"></div>
<div class="a" style="left:54px;top:165px;width:28.50px;height:11.00px;background:#00ae42;border-radius:5.5px"></div>
<div class="a" style="left:59.2px;top:167.46px;font-size:6.4px;color:#eafff0;font-weight:normal;">Global</div>
<div class="a" style="left:83.6px;top:167.66px;font-size:6.4px;color:#8a8a8a;font-weight:normal;">Objects</div>
<div class="a" style="left:139.5px;top:166.28px;font-size:8px;color:#303030;font-weight:normal;">Advanced</div>
<div class="a" style="left:176px;top:165px;width:15.50px;height:10.50px;background:#00ae42;border-radius:5.25px"></div>
<div class="a" style="left:183.3px;top:166.3px;width:6.90px;height:7.90px;background:#fff;border-radius:50%"></div>
<svg class="a" style="left:197.5px;top:166px" width="10" height="10" viewBox="0 0 10 10"><rect x="0.5" y="0.5" width="8.5" height="8.5" fill="none" stroke="#555" stroke-width="0.9"/><path d="M3,0.5 L3,9 M4.5,3 L7.5,3 M4.5,6 L7.5,6" stroke="#555" stroke-width="0.7"/></svg>
<svg class="a" style="left:208px;top:166px" width="9" height="9" viewBox="0 0 9 9"><path d="M1,1.5 L3.5,1.5 M1,4 L3.5,4 M5,1 L8,4 M8,1 L5,4 M1,6 L4,8.5 M4,6 L1,8.5 M5.5,7 L8,7" stroke="#3db89a" stroke-width="0.9"/></svg>
<svg class="a" style="left:2px;top:187.5px" width="8" height="8" viewBox="0 0 8 8"><path d="M6.5,5.5 A3,3 0 1 1 5.5,1.8" fill="none" stroke="#f07a5a" stroke-width="0.9"/><path d="M4.5,0.8 L6.5,2 L5,3.5" fill="none" stroke="#f07a5a" stroke-width="0.8"/></svg>
<div class="a" style="left:14.5px;top:185px;width:171.50px;height:13.00px;border:1px solid #e4e4e4;background:#fff"></div>
<div class="a" style="left:19px;top:189.3px;width:3px;height:3px;border-right:1px solid #9a9a9a;border-bottom:1px solid #9a9a9a;transform:rotate(45deg)"></div>
<div class="a" style="left:26px;top:187.78px;font-size:8px;color:#333;font-weight:normal;">* 0.08mm Extra Fine @BBL X1C</div>
<svg class="a" style="left:194.5px;top:187.5px" width="9" height="8" viewBox="0 0 9 8"><path d="M0.8,0.8 L6,0.8 L8,2.8 L8,7.2 L0.8,7.2 Z" fill="none" stroke="#555" stroke-width="0.9"/><rect x="2.5" y="4.5" width="4" height="2.7" fill="#555"/></svg>
<svg class="a" style="left:206.5px;top:187.5px" width="9" height="9" viewBox="0 0 9 9"><circle cx="3.7" cy="3.7" r="2.9" fill="none" stroke="#555" stroke-width="0.9"/><path d="M5.8,5.8 L8.5,8.5" stroke="#555" stroke-width="1"/></svg>
<div class="a" style="left:8px;top:208.88px;font-size:8.4px;color:#262626;font-weight:bold;letter-spacing:-0.15px">Quality</div>
<div class="a" style="left:50px;top:208.79px;font-size:8.6px;color:#8c8c8c;font-weight:normal;">Strength</div>
<div class="a" style="left:97.8px;top:208.88px;font-size:8.4px;color:#8c8c8c;font-weight:normal;">Speed</div>
<div class="a" style="left:136.6px;top:208.84px;font-size:8.5px;color:#8c8c8c;font-weight:normal;">Support</div>
<div class="a" style="left:182.6px;top:208.98px;font-size:8.2px;color:#f07050;font-weight:normal;">Others</div>
<div class="a" style="left:6px;top:219px;width:30.00px;height:1.70px;background:#00ae42"></div>
<div class="a" style="left:0px;top:221px;width:221.00px;height:1.00px;background:#e8e8e8"></div>
<svg class="a" style="left:2px;top:227.5px" width="9" height="8" viewBox="0 0 9 8"><rect x="0.5" y="0.5" width="8" height="7" rx="1.5" fill="#666"/><path d="M0.5,3 L8.5,3 M0.5,5 L8.5,5" stroke="#fff" stroke-width="0.7"/></svg><div class="a" style="left:13.5px;top:228.28px;font-size:8.2px;color:#222;font-weight:bold;">Layer height</div><div class="a" style="left:63px;top:231.0px;width:145.00px;height:1.00px;background:#f0f0f0"></div>
<div class="a" style="left:12px;top:243.81px;font-size:8.55px;color:#424242;font-weight:normal;">Layer height</div><div class="a" style="left:128px;top:241.1px;width:63.50px;height:13.80px;border:1px solid #e8e8e8;background:#fff"></div><div class="a" style="left:132.5px;top:243.98px;font-size:8.4px;color:#333;font-weight:normal;letter-spacing:-0.2px">0.08</div><div class="a" style="left:176px;top:246.46px;font-size:6.4px;color:#707070;font-weight:normal;letter-spacing:-0.3px">mm</div>
<div class="a" style="left:12px;top:259.61px;font-size:8.55px;color:#424242;font-weight:normal;">Initial layer height</div><div class="a" style="left:128px;top:256.90000000000003px;width:63.50px;height:13.80px;border:1px solid #e8e8e8;background:#fff"></div><div class="a" style="left:132.5px;top:259.78px;font-size:8.4px;color:#333;font-weight:normal;letter-spacing:-0.2px">0.2</div><div class="a" style="left:176px;top:262.26px;font-size:6.4px;color:#707070;font-weight:normal;letter-spacing:-0.3px">mm</div>
<svg class="a" style="left:2px;top:277.5px" width="9" height="8" viewBox="0 0 9 8"><rect x="0.5" y="1" width="8" height="6" fill="#777"/><path d="M0.5,3.5 L8.5,3.5" stroke="#fff" stroke-width="0.8"/></svg><div class="a" style="left:13.5px;top:278.28px;font-size:8.2px;color:#222;font-weight:bold;">Line width</div><div class="a" style="left:63px;top:281.0px;width:145.00px;height:1.00px;background:#f0f0f0"></div>
<div class="a" style="left:12px;top:294.41px;font-size:8.55px;color:#424242;font-weight:normal;">Default</div><div class="a" style="left:128px;top:291.70000000000005px;width:63.50px;height:13.80px;border:1px solid #e8e8e8;background:#fff"></div><div class="a" style="left:132.5px;top:294.58px;font-size:8.4px;color:#333;font-weight:normal;letter-spacing:-0.2px">0.42</div><div class="a" style="left:176px;top:297.06px;font-size:6.4px;color:#707070;font-weight:normal;letter-spacing:-0.3px">mm</div>
<div class="a" style="left:12px;top:310.21px;font-size:8.55px;color:#424242;font-weight:normal;">Initial layer</div><div class="a" style="left:128px;top:307.5px;width:63.50px;height:13.80px;border:1px solid #e8e8e8;background:#fff"></div><div class="a" style="left:132.5px;top:310.38px;font-size:8.4px;color:#333;font-weight:normal;letter-spacing:-0.2px">0.5</div><div class="a" style="left:176px;top:312.86px;font-size:6.4px;color:#707070;font-weight:normal;letter-spacing:-0.3px">mm</div>
<div class="a" style="left:12px;top:326.01px;font-size:8.55px;color:#424242;font-weight:normal;">Outer wall</div><div class="a" style="left:128px;top:323.3px;width:63.50px;height:13.80px;border:1px solid #e8e8e8;background:#fff"></div><div class="a" style="left:132.5px;top:326.18px;font-size:8.4px;color:#333;font-weight:normal;letter-spacing:-0.2px">0.42</div><div class="a" style="left:176px;top:328.66px;font-size:6.4px;color:#707070;font-weight:normal;letter-spacing:-0.3px">mm</div>
<div class="a" style="left:12px;top:341.81px;font-size:8.55px;color:#424242;font-weight:normal;">Inner wall</div><div class="a" style="left:128px;top:339.1px;width:63.50px;height:13.80px;border:1px solid #e8e8e8;background:#fff"></div><div class="a" style="left:132.5px;top:341.98px;font-size:8.4px;color:#333;font-weight:normal;letter-spacing:-0.2px">0.45</div><div class="a" style="left:176px;top:344.46px;font-size:6.4px;color:#707070;font-weight:normal;letter-spacing:-0.3px">mm</div>
<div class="a" style="left:12px;top:357.61px;font-size:8.55px;color:#424242;font-weight:normal;">Top surface</div><div class="a" style="left:128px;top:354.90000000000003px;width:63.50px;height:13.80px;border:1px solid #e8e8e8;background:#fff"></div><div class="a" style="left:132.5px;top:357.78px;font-size:8.4px;color:#333;font-weight:normal;letter-spacing:-0.2px">0.42</div><div class="a" style="left:176px;top:360.26px;font-size:6.4px;color:#707070;font-weight:normal;letter-spacing:-0.3px">mm</div>
<div class="a" style="left:12px;top:373.41px;font-size:8.55px;color:#424242;font-weight:normal;">Sparse infill</div><div class="a" style="left:128px;top:370.70000000000005px;width:63.50px;height:13.80px;border:1px solid #e8e8e8;background:#fff"></div><div class="a" style="left:132.5px;top:373.58px;font-size:8.4px;color:#333;font-weight:normal;letter-spacing:-0.2px">0.45</div><div class="a" style="left:176px;top:376.06px;font-size:6.4px;color:#707070;font-weight:normal;letter-spacing:-0.3px">mm</div>
<div class="a" style="left:12px;top:389.21px;font-size:8.55px;color:#424242;font-weight:normal;">Internal solid infill</div><div class="a" style="left:128px;top:386.5px;width:63.50px;height:13.80px;border:1px solid #e8e8e8;background:#fff"></div><div class="a" style="left:132.5px;top:389.38px;font-size:8.4px;color:#333;font-weight:normal;letter-spacing:-0.2px">0.42</div><div class="a" style="left:176px;top:391.86px;font-size:6.4px;color:#707070;font-weight:normal;letter-spacing:-0.3px">mm</div>
<div class="a" style="left:12px;top:405.01px;font-size:8.55px;color:#424242;font-weight:normal;">Support</div><div class="a" style="left:128px;top:402.3px;width:63.50px;height:13.80px;border:1px solid #e8e8e8;background:#fff"></div><div class="a" style="left:132.5px;top:405.18px;font-size:8.4px;color:#333;font-weight:normal;letter-spacing:-0.2px">0.42</div><div class="a" style="left:176px;top:407.66px;font-size:6.4px;color:#707070;font-weight:normal;letter-spacing:-0.3px">mm</div>
<svg class="a" style="left:2px;top:423px" width="9" height="8" viewBox="0 0 9 8"><rect x="0.5" y="0.5" width="7.5" height="7" fill="none" stroke="#666" stroke-width="0.9"/><path d="M2,6 L6.5,2" stroke="#666" stroke-width="1.2"/></svg><div class="a" style="left:13.5px;top:423.78px;font-size:8.2px;color:#222;font-weight:bold;">Seam</div><div class="a" style="left:40px;top:426.5px;width:168.00px;height:1.00px;background:#f0f0f0"></div>
<div class="a" style="left:12px;top:439.61px;font-size:8.55px;color:#424242;font-weight:normal;">Seam position</div>
<div class="a" style="left:128px;top:437px;width:63.50px;height:14.00px;border:1px solid #e2e2e2;background:#fff"></div>
<div class="a" style="left:132.5px;top:441.3px;width:3px;height:3px;border-right:1px solid #aaa;border-bottom:1px solid #aaa;transform:rotate(45deg)"></div>
<div class="a" style="left:139.4px;top:440.18px;font-size:8.2px;color:#303030;font-weight:normal;">Aligned</div>
<div class="a" style="left:12px;top:455.81px;font-size:8.55px;color:#424242;font-weight:normal;">Scarf joint seam</div>
<div class="a" style="left:12px;top:465.41px;font-size:8.55px;color:#424242;font-weight:normal;">(experimental)</div>
<div class="a" style="left:128px;top:457px;width:63.50px;height:14.50px;border:1px solid #e2e2e2;background:#fff"></div>
<div class="a" style="left:132.5px;top:461.5px;width:3px;height:3px;border-right:1px solid #aaa;border-bottom:1px solid #aaa;transform:rotate(45deg)"></div>
<div class="a" style="left:139.4px;top:460.48px;font-size:8.2px;color:#303030;font-weight:normal;">None</div>
<svg class="a" style="left:2px;top:483.3px" width="9" height="8" viewBox="0 0 9 8"><circle cx="4.5" cy="4" r="3" fill="none" stroke="#555" stroke-width="1"/><path d="M4.5,0 L4.5,8 M0.5,4 L8.5,4" stroke="#555" stroke-width="0.8"/></svg><div class="a" style="left:13.5px;top:484.08px;font-size:8.2px;color:#222;font-weight:bold;">Precision</div><div class="a" style="left:63px;top:486.8px;width:145.00px;height:1.00px;background:#f0f0f0"></div>
<div class="a" style="left:12px;top:499.81px;font-size:8.55px;color:#424242;font-weight:normal;">Slice gap closing radius</div><div class="a" style="left:128px;top:497.1px;width:63.50px;height:13.80px;border:1px solid #e8e8e8;background:#fff"></div><div class="a" style="left:132.5px;top:499.98px;font-size:8.4px;color:#333;font-weight:normal;letter-spacing:-0.2px">0.049</div><div class="a" style="left:176px;top:502.46px;font-size:6.4px;color:#707070;font-weight:normal;letter-spacing:-0.3px">mm</div>
<div class="a" style="left:12px;top:515.81px;font-size:8.55px;color:#424242;font-weight:normal;">Resolution</div><div class="a" style="left:128px;top:513.1px;width:63.50px;height:13.80px;border:1px solid #e8e8e8;background:#fff"></div><div class="a" style="left:132.5px;top:515.98px;font-size:8.4px;color:#333;font-weight:normal;letter-spacing:-0.2px">0.012</div><div class="a" style="left:176px;top:518.46px;font-size:6.4px;color:#707070;font-weight:normal;letter-spacing:-0.3px">mm</div>
<div class="a" style="left:129px;top:530px;width:8.00px;height:6.00px;background:#5ab57c;border-radius:1px"></div>
<div class="a" style="left:212px;top:222px;width:8.00px;height:310.00px;background:#efefef"></div>
<div class="a" style="left:215.8px;top:233px;width:1.60px;height:147.50px;background:#8c8c8c;border-radius:1px"></div>
</body></html>
